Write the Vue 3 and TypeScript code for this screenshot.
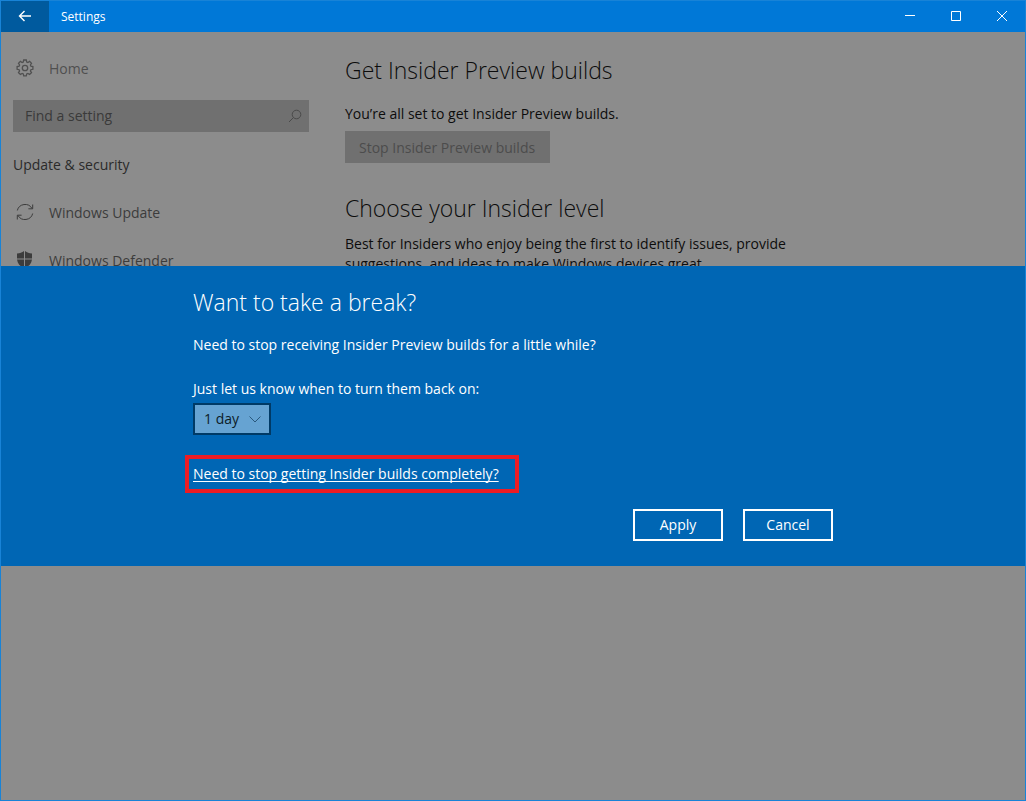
<script setup lang="ts">
import { ref } from 'vue'

const query = ref('')
const pause = ref('1 day')
const pauseOptions: string[] = ['1 day', '2 days', '3 days', '7 days']
</script>

<template>
  <div class="window">
    <header class="titlebar">
      <button class="back" type="button" aria-label="Back">
        <svg width="14" height="12" viewBox="0 0 14 12"><path d="M13 6H1.5M6.5 1L1.5 6l5 5" /></svg>
      </button>
      <span class="title">Settings</span>
      <div class="controls">
        <button type="button" aria-label="Minimize">
          <svg width="10" height="10" viewBox="0 0 10 10"><path d="M0 4.500h10" /></svg>
        </button>
        <button type="button" aria-label="Maximize">
          <svg width="10" height="10" viewBox="0 0 10 10"><path d="M.5.5h9v9h-9z" /></svg>
        </button>
        <button type="button" aria-label="Close">
          <svg width="10" height="10" viewBox="0 0 10 10"><path d="M0 0l10 10M10 0L0 10" /></svg>
        </button>
      </div>
    </header>

    <div class="body">
      <div class="page">
        <nav class="sidebar">
          <a class="item home" href="#home">
            <svg width="18" height="18" viewBox="0 0 18 18">
              <path d="M7.7 1h2.6l.4 2 1.2.5 1.7-1.1 1.9 1.9-1.1 1.7.5 1.2 2 .4v2.7l-2 .4-.5 1.2 1.1 1.7-1.900 1.900-1.700-1.100-1.200.5-.4 2H7.700l-.4-2-1.200-.5-1.700 1.100-1.900-1.900 1.100-1.700-.5-1.200-2-.4V7.600l2-.4.5-1.200-1.100-1.700 1.900-1.900 1.700 1.100L7.300 3z" />
              <circle cx="9" cy="9" r="2.700" />
            </svg>
            <span>Home</span>
          </a>
          <label class="search">
            <input v-model="query" type="text" placeholder="Find a setting" aria-label="Find a setting" />
            <svg width="14" height="14" viewBox="0 0 14 14"><circle cx="8.500" cy="5.500" r="4.300" /><path d="M5.400 8.600L1 13" /></svg>
          </label>
          <h2 class="section">Update &amp; security</h2>
          <a class="item" href="#update">
            <svg width="18" height="18" viewBox="0 0 18 18">
              <path d="M1.300 7.500A8 8 0 0 1 16 5.500M16.700 1.500v4.300h-4.300M16.700 10.500A8 8 0 0 1 2 12.500M1.300 16.500v-4.300h4.300" />
            </svg>
            <span>Windows Update</span>
          </a>
          <a class="item" href="#defender">
            <svg class="shield" width="18" height="18" viewBox="0 0 18 18">
              <path d="M8 0v7.500H1V2.500C4 2.500 6 1.500 8 0zM9 0c2 1.500 4 2.500 7 2.500v5H9zM1 8.500h7V17C4 15.500 1.500 12.500 1 8.500zM9 8.500h7c-.5 4-3 7-7 8.500z" />
            </svg>
            <span>Windows Defender</span>
          </a>
        </nav>

        <main class="content">
          <h1>Get Insider Preview builds</h1>
          <p class="status">You’re all set to get Insider Preview builds.</p>
          <button class="stop" type="button" disabled>Stop Insider Preview builds</button>
          <h1 class="level">Choose your Insider level</h1>
          <p>Best for Insiders who enjoy being the first to identify issues, provide suggestions, and ideas to make Windows devices great.</p>
        </main>
      </div>

      <div class="overlay">
        <section class="dialog" role="dialog" aria-labelledby="dialog-title">
          <div class="inner">
            <h1 id="dialog-title">Want to take a break?</h1>
            <p class="question">Need to stop receiving Insider Preview builds for a little while?</p>
            <label class="pause-label" for="pause">Just let us know when to turn them back on:</label>
            <div class="picker">
              <select id="pause" v-model="pause">
                <option v-for="option in pauseOptions" :key="option">{{ option }}</option>
              </select>
              <svg width="12" height="7" viewBox="0 0 12 7"><path d="M.5.5L6 6 11.500.5" /></svg>
            </div>
            <a class="stop-link" href="#stop">Need to stop getting Insider builds completely?</a>
            <div class="actions">
              <button type="button">Apply</button>
              <button type="button">Cancel</button>
            </div>
          </div>
        </section>
      </div>
    </div>
  </div>
</template>

<style>
body {
  margin: 0;
}
</style>

<style scoped>
* {
  box-sizing: border-box;
}
.window {
  display: flex;
  flex-direction: column;
  height: 100vh;
  border: 1px solid #1883d7;
  background: #8c8c8c;
  color: #0c0c0c;
  font: 14px/20px "Segoe UI", "Open Sans", "Noto Sans", sans-serif;
}
h1, h2, p {
  margin: 0;
  font-weight: 400;
}
h1 {
  font-size: 23px;
  line-height: 32px;
  font-weight: 300;
}
a {
  color: inherit;
  text-decoration: none;
}
button, input, select {
  margin: 0;
  padding: 0;
  border: 0;
  border-radius: 0;
  background: none;
  color: inherit;
  font: inherit;
}
svg {
  flex: none;
  fill: none;
  stroke: currentColor;
}
.titlebar {
  display: flex;
  align-items: stretch;
  flex: none;
  height: 31px;
  background: #0078d7;
  color: #fff;
}
.back {
  display: flex;
  align-items: center;
  justify-content: center;
  width: 48px;
  padding-bottom: 1px;
  background: #005a9e;
}
.back svg {
  stroke-width: 1.400;
}
.title {
  flex: 1;
  padding-left: 12px;
  font-size: 12px;
  line-height: 31px;
}
.controls {
  display: flex;
}
.controls button {
  display: flex;
  align-items: center;
  justify-content: center;
  width: 46px;
  padding-bottom: 1px;
}
.body {
  position: relative;
  flex: 1;
  min-height: 0;
  overflow: hidden;
}
.page {
  display: flex;
  gap: 36px;
}
.sidebar {
  flex: none;
  width: 308px;
  padding: 12px 0 0 12px;
  color: #3c3c3c;
}
.item {
  display: flex;
  align-items: center;
  gap: 15px;
  height: 48px;
  padding-left: 3px;
}
.item span {
  padding-top: 2px;
}
.home {
  color: #505050;
}
.home svg {
  stroke-width: 1.300;
}
.search {
  display: flex;
  align-items: center;
  height: 32px;
  margin: 8px 0 23px;
  padding: 0 7px 0 12px;
  background: #707070;
  color: #4a4a4a;
}
.search input {
  flex: 1;
  min-width: 0;
  outline: 0;
}
.search input::placeholder {
  color: #3a3a3a;
  opacity: 1;
}
.section {
  margin-bottom: 13px;
  font-size: 14px;
  line-height: 20px;
  color: #2a2a2a;
}
.shield {
  fill: currentColor;
  stroke: none;
}
.content {
  flex: 1;
  max-width: 464px;
  padding-top: 22px;
}
.status {
  margin: 18px 0 7px;
}
.stop {
  display: block;
  height: 32px;
  padding: 2px 15px 0 14px;
  background: #707070;
  color: #4c4c4c;
}
.level {
  margin: 29px 0 10px;
}
.overlay {
  position: absolute;
  inset: 0;
  display: flex;
  align-items: center;
}
.dialog {
  width: 100%;
  padding: 20px 24px 25px;
  background: #0066b4;
  color: #fff;
}
.inner {
  display: flex;
  flex-direction: column;
  align-items: flex-start;
  max-width: 640px;
  margin: 0 auto;
}
.question {
  margin: 17px 0 24px;
}
.pause-label {
  margin-bottom: 4px;
}
.picker {
  position: relative;
  margin-bottom: 28px;
  color: #0c1c28;
}
.picker select {
  display: block;
  width: 78px;
  height: 32px;
  padding: 0 26px 0 9px;
  border: 2px solid #003a66;
  background: #66a3d2;
  appearance: none;
}
.picker svg {
  position: absolute;
  top: 13px;
  right: 10px;
  stroke: #2a587c;
  pointer-events: none;
}
.stop-link {
  padding-right: 12px;
  outline: 4px solid #ec1c24;
  outline-offset: 4px;
  line-height: 22px;
  text-decoration: underline;
  text-underline-offset: 2px;
  text-decoration-skip-ink: none;
}
.actions {
  display: flex;
  align-self: flex-end;
  gap: 20px;
  margin-top: 24px;
}
.actions button {
  width: 90px;
  height: 32px;
  border: 2px solid #fff;
}
</style>
